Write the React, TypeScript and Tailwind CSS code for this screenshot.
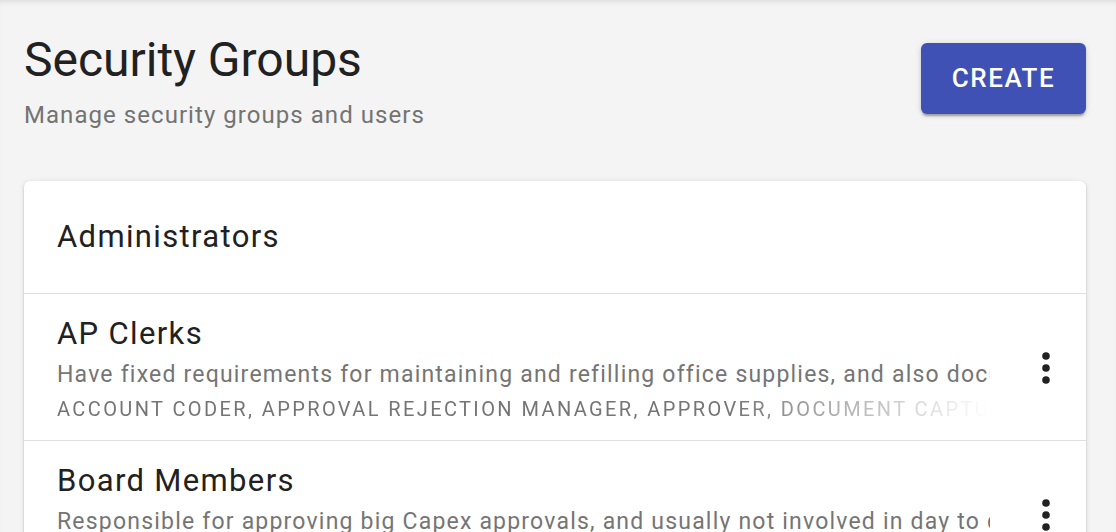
import { MouseEvent } from "react";

interface Group {
    name: string;
    description?: string;
    roles?: string[];
}

const groups: Group[] = [
    { name: "Administrators" },
    {
        name: "AP Clerks",
        description:
            "Have fixed requirements for maintaining and refilling office supplies, and also document all incoming invoices",
        roles: ["Account Coder", "Approval Rejection Manager", "Approver", "Document Capture", "Viewer"],
    },
    {
        name: "Board Members",
        description:
            "Responsible for approving big Capex approvals, and usually not involved in day to day operations",
        roles: ["Approver", "Viewer"],
    },
];

function MoreVert() {
    return (
        <svg width="24" height="36" viewBox="0 0 24 36" fill="#212121">
            <circle cx="12" cy="6" r="3.8" />
            <circle cx="12" cy="18" r="3.8" />
            <circle cx="12" cy="30" r="3.8" />
        </svg>
    );
}

function GroupRow({ group }: { group: Group }) {
    const onMenu = (e: MouseEvent) => e.preventDefault();

    if (!group.description) {
        return (
            <div className="flex items-center pl-[33px] pr-[16px] py-[36px]">
                <span className="text-[31px] leading-[40px] text-[#212121] tracking-[1.35px]">{group.name}</span>
            </div>
        );
    }

    return (
        <div className="flex items-center border-t border-[#e0e0e0] pl-[33px] pr-[16px] pt-[20px] pb-[18px]">
            <div className="flex-1 min-w-0 overflow-hidden mr-[32px]">
                <div className="text-[31px] leading-[40px] text-[#212121] tracking-[1.35px] whitespace-nowrap">
                    {group.name}
                </div>
                <div className="text-[23px] leading-[42px] text-[#757575] tracking-[1.2px] whitespace-nowrap">
                    {group.description}
                </div>
                <div className="text-[20px] leading-[26px] text-[#757575] tracking-[2.4px] uppercase whitespace-nowrap [mask-image:linear-gradient(to_right,black_72%,transparent_100%)]">
                    {group.roles?.join(", ")}
                </div>
            </div>
            <button onClick={onMenu} className="w-[48px] h-[48px] flex items-center justify-center rounded-full">
                <MoreVert />
            </button>
        </div>
    );
}

export default function App() {
    return (
        <div className="min-h-[532px] bg-[#f4f4f4] font-['Roboto',sans-serif] pl-[24px] pr-[30px] pt-[32px] shadow-[inset_0_5px_6px_-4px_rgba(0,0,0,0.12)]">
            <div className="flex justify-between items-start">
                <div>
                    <h1 className="text-[48px] leading-[56px] text-[#212121] font-normal">Security Groups</h1>
                    <p className="mt-[11px] text-[24px] leading-[32px] text-[#737373] tracking-[1.05px]">
                        Manage security groups and users
                    </p>
                </div>
                <button className="mt-[11px] w-[165px] h-[71px] rounded-[6px] bg-[#3f51b5] text-white text-[26px] font-medium tracking-[1.55px] shadow-[0_4px_2px_-2px_rgba(0,0,0,0.2),0_2px_3px_0_rgba(0,0,0,0.14),0_1px_7px_0_rgba(0,0,0,0.12)]">
                    CREATE
                </button>
            </div>

            <div className="mt-[50px] bg-white rounded-[6px] overflow-hidden shadow-[0_3px_2px_-1px_rgba(0,0,0,0.2),0_1px_2px_0_rgba(0,0,0,0.14),0_1px_5px_0_rgba(0,0,0,0.12)]">
                {groups.map((g) => (
                    <GroupRow key={g.name} group={g} />
                ))}
            </div>
        </div>
    );
}
